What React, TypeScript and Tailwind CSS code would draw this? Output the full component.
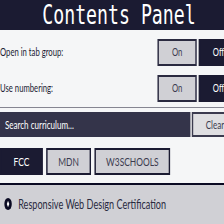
export default function App() {
  const rows = ['Open in tab group:', 'Use numbering:'];
  const tabs = [
    { name: 'FCC', w: 'w-[61px]', active: true },
    { name: 'MDN', w: 'w-[64px]', active: false },
    { name: 'W3SCHOOLS', w: 'w-[108px]', active: false },
  ];

  return (
    <div className="w-[224px] h-[224px] overflow-hidden bg-[#f5f6f7]">
      {/* page is laid out wide and squeezed, like the capture */}
      <div className="w-[340px] origin-top-left scale-x-[0.7] font-['Lato',sans-serif]">
        {/* Header */}
        <div className="h-[30px] bg-[#1b1b32] flex items-center justify-center">
          <h1 className="text-[26px] leading-[30px] text-white font-['DejaVu_Sans_Mono',monospace]">Contents Panel</h1>
        </div>

        {/* Settings */}
        <div className="pt-[9px] flex flex-col gap-[9px] pb-[5px] border-b border-[#858591]">
          {rows.map((label) => (
            <div key={label} className="flex items-center justify-between h-[27px]">
              <span className="text-[11px] text-[#1b1b32]">{label}</span>
              <div className="flex gap-[3px] h-full">
                <button className="w-14 h-full bg-[#d0d0d5] border-2 border-[#2a2a40] text-[11px] text-[#3b3b4f]">On</button>
                <button className="w-14 h-full bg-[#1b1b32] border-2 border-[#1b1b32] text-[11px] text-white">Off</button>
              </div>
            </div>
          ))}
        </div>

        {/* Search */}
        <div className="mt-[4px] flex h-[25px] gap-[2px]">
          <div className="flex-1 bg-[#34344a] flex items-center px-[7px] text-[11.5px] text-white">Search curriculum...</div>
          <button className="w-[66px] bg-[#dfdfe2] border-2 border-[#3b3b4f] text-[11.5px] text-[#3b3b4f]">Clear</button>
        </div>

        {/* Tabs */}
        <div className="mt-[11px] flex gap-[5px] h-[27px]">
          {tabs.map((t) => (
            <button
              key={t.name}
              className={`${t.w} h-full border-2 border-[#1b1b32] text-[12px] ${t.active ? 'bg-[#1b1b32] text-white' : 'bg-[#d0d0d5] text-[#3b3b4f]'}`}
            >
              {t.name}
            </button>
          ))}
        </div>

        {/* Accordion */}
        <div className="mt-[8px] border-t-2 border-[#0a0a23] bg-[#d0d0d5] h-[60px]">
          <div className="flex items-center gap-[9px] pl-[6px] pt-[10px]">
            <svg width="11" height="12" viewBox="0 0 11 12">
              <ellipse cx="5.5" cy="6" rx="5.5" ry="6" fill="#0a0a23" />
              <path d="M5.5 2.8 L7.3 6 L5.5 9.2 L3.7 6Z" fill="#ffffff" />
            </svg>
            <span className="text-[13px] leading-[18px] text-[#2a2a40]">Responsive Web Design Certification</span>
          </div>
          <p className="mt-[8px] pl-[22px] text-[12px] leading-[16px] text-[#3b3b4f]">
            Learn the languages that developers use to build webpages: HTML and CSS.
          </p>
        </div>
      </div>
    </div>
  );
}
